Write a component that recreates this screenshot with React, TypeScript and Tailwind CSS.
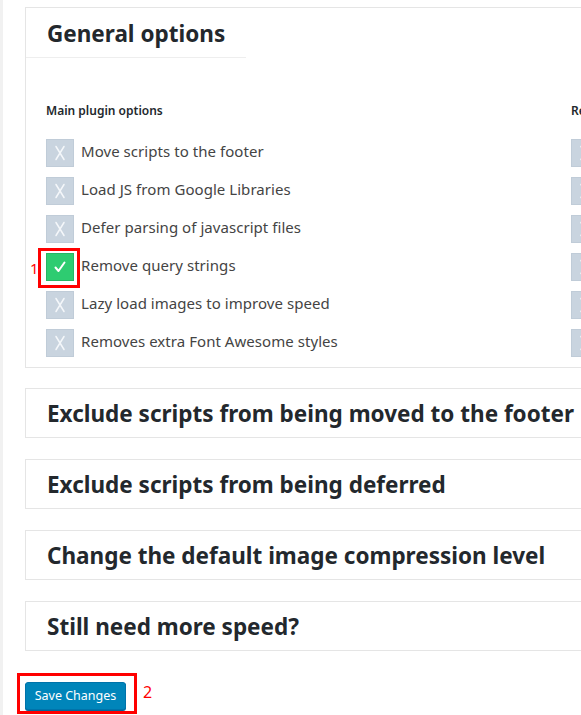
import React from "react"

const leftOptions = [
  { label: "Move scripts to the footer", on: false },
  { label: "Load JS from Google Libraries", on: false },
  { label: "Defer parsing of javascript files", on: false },
  { label: "Remove query strings", on: true },
  { label: "Lazy load images to improve speed", on: false },
  { label: "Removes extra Font Awesome styles", on: false },
]

const sections = [
  "Exclude scripts from being moved to the footer",
  "Exclude scripts from being deferred",
  "Change the default image compression level",
  "Still need more speed?",
]

function Toggle({ on }: { on: boolean }) {
  if (on) {
    return (
      <div className="w-[28px] h-[28px] shrink-0 bg-[#2ecc71] border border-[#27b564] flex items-center justify-center">
        <svg width="14" height="14" viewBox="0 0 14 14" fill="none">
          <path d="M2.5 7.5 L5.5 11 L11.5 2.5" stroke="white" strokeWidth="2" strokeLinecap="round" strokeLinejoin="round" />
        </svg>
      </div>
    )
  }
  return (
    <div className="w-[28px] h-[28px] shrink-0 bg-[#c9d4df] border border-[#c0ccd8] flex items-center justify-center">
      <svg width="12" height="16" viewBox="0 0 12 16" fill="none">
        <path d="M2 1.5 L10 14.5 M10 1.5 L2 14.5" stroke="#f4f7fa" strokeWidth="1.5" strokeLinecap="round" />
      </svg>
    </div>
  )
}

export default function App() {
  return (
    <div
      className="relative w-[581px] h-[715px] overflow-hidden bg-white border-l-[3px] border-[#f1f1f1] text-[#23282d]"
      style={{ fontFamily: '"Noto Sans", "Open Sans", sans-serif' }}
    >
      {/* General options card */}
      <div className="ml-[22px] mt-[7px] w-[700px] border border-[#e5e5e5] bg-white">
        <div className="w-[220px] h-[50px] border-b border-[#eeeeee] flex items-center pl-[21px] pt-[3px]">
          <h2 className="text-[22.5px] font-bold leading-none">General options</h2>
        </div>
        <div className="pl-[20px] pt-[45px] pb-[10px] flex">
          <div className="w-[525px]">
            <div className="text-[12px] font-semibold leading-[16px] h-[16px] mb-[20px]">Main plugin options</div>
            <div className="flex flex-col gap-[10px]">
              {leftOptions.map((o) => (
                <div key={o.label} className="flex items-center gap-[7px] h-[28px]">
                  <Toggle on={o.on} />
                  <span className="text-[15px] text-[#444] leading-none pb-[3px] tracking-[0.05px]">{o.label}</span>
                </div>
              ))}
            </div>
          </div>
          <div>
            <div className="text-[12px] font-semibold leading-[16px] h-[16px] mb-[20px]">Re</div>
            <div className="flex flex-col gap-[10px]">
              {leftOptions.map((o) => (
                <div key={o.label} className="flex items-center h-[28px]">
                  <Toggle on={false} />
                </div>
              ))}
            </div>
          </div>
        </div>
      </div>

      {/* Collapsed sections */}
      <div className="ml-[22px] mt-[20px] flex flex-col gap-[21px]">
        {sections.map((s) => (
          <div key={s} className="w-[700px] h-[50px] border border-[#e5e5e5] flex items-center pl-[21px] pt-[2px]">
            <h2 className="text-[22.5px] font-bold leading-none whitespace-nowrap">{s}</h2>
          </div>
        ))}
      </div>

      <div className="ml-[22px] mt-[31px]">
        <button className="h-[28px] w-[101px] rounded-[3px] bg-[#0085ba] border border-[#0073aa] shadow-[0_1px_0_#006799] text-white text-[12.5px] leading-none">
          Save Changes
        </button>
      </div>

      {/* annotations */}
      <div className="absolute left-[35px] top-[248px] w-[42px] h-[40px] border-[3px] border-[#ff0000]" />
      <div className="absolute left-[27px] top-[261px] text-[15px] leading-none text-[#ff0000]">1</div>
      <div className="absolute left-[14px] top-[673px] w-[120px] h-[41px] border-[3px] border-[#ff0000]" />
      <div className="absolute left-[140px] top-[684px] text-[16px] leading-none text-[#ff0000]">2</div>
    </div>
  )
}
